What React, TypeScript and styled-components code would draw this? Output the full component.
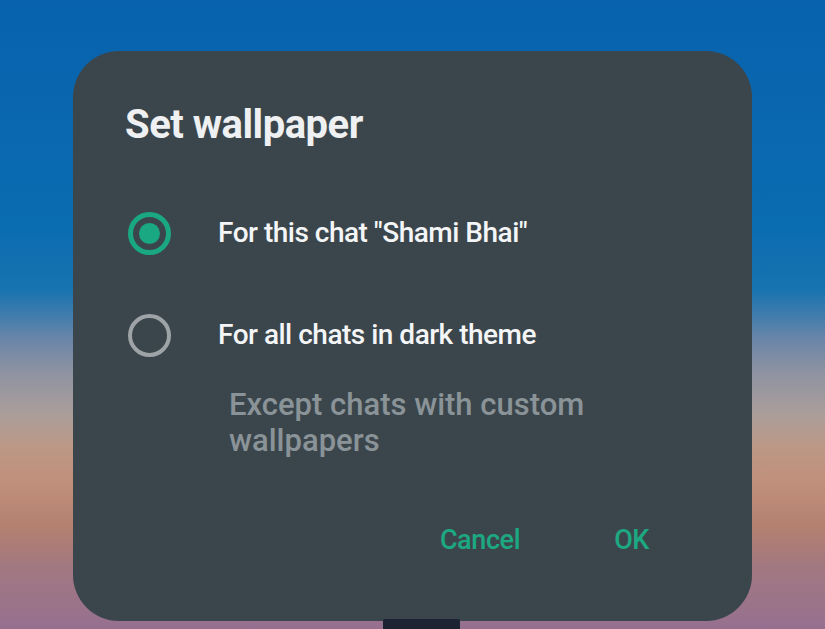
import { FC, useState } from 'react';
import styled, { createGlobalStyle } from 'styled-components';

const GlobalStyle = createGlobalStyle`
  html, body {
    margin: 0;
    padding: 0;
    height: 100%;
    overflow: hidden;
  }
  body {
    font-family: Roboto, 'Noto Sans', 'Liberation Sans', sans-serif;
  }
`;

interface OptionProps {
  label: string;
  checked: boolean;
  onSelect: () => void;
}

const Option: FC<OptionProps> = ({ label, checked, onSelect }) => (
  <Row onClick={onSelect}>
    <Radio checked={checked}>{checked && <Dot />}</Radio>
    <Label>{label}</Label>
  </Row>
);

const App: FC = () => {
  const [choice, setChoice] = useState<'chat' | 'all'>('chat');

  return (
    <Page>
      <GlobalStyle />
      <Dialog>
        <Title>Set wallpaper</Title>
        <Options>
          <Option
            label='For this chat "Shami Bhai"'
            checked={choice === 'chat'}
            onSelect={() => setChoice('chat')}
          />
          <Option
            label='For all chats in dark theme'
            checked={choice === 'all'}
            onSelect={() => setChoice('all')}
          />
        </Options>
        <Hint>
          Except chats with custom
          <br />
          wallpapers
        </Hint>
        <Actions>
          <Action>Cancel</Action>
          <Action>OK</Action>
        </Actions>
      </Dialog>
      <Stand />
    </Page>
  );
};

const Page = styled.div`
  height: 629px;
  box-sizing: border-box;
  padding: 51px 0 0 73px;
  background: linear-gradient(
    180deg,
    #0862ad 0%,
    #0a6cb1 36%,
    #1873b0 46%,
    #3f7cad 50%,
    #6a86a8 54%,
    #8d92a2 59%,
    #ab9e9a 66%,
    #bc9886 71%,
    #c08f7a 77%,
    #b38070 84%,
    #a27880 90%,
    #967090 100%
  );
`;

const Dialog = styled.div`
  width: 679px;
  height: 570px;
  box-sizing: border-box;
  background-color: #3b464c;
  border-radius: 46px;
  padding: 52px 0 0 0;
  display: flex;
  flex-direction: column;
`;

const Title = styled.h1`
  margin: 0 0 0 52px;
  font-size: 40px;
  line-height: 44px;
  font-weight: 700;
  letter-spacing: -0.5px;
  color: #eef0f1;
`;

const Options = styled.div`
  margin-top: 56px;
  display: flex;
  flex-direction: column;
  gap: 42px;
`;

const Row = styled.div`
  height: 60px;
  display: flex;
  align-items: center;
  padding-left: 55px;
  cursor: pointer;
`;

const Radio = styled.div<{ checked: boolean }>`
  width: 43px;
  height: 43px;
  box-sizing: border-box;
  border-radius: 50%;
  border: ${({ checked }) => (checked ? '5px solid #1aa883' : '4px solid #9da3a6')};
  display: flex;
  align-items: center;
  justify-content: center;
  flex-shrink: 0;
`;

const Dot = styled.span`
  width: 21px;
  height: 21px;
  border-radius: 50%;
  background-color: #1aa883;
`;

const Label = styled.span`
  margin-left: 47px;
  font-size: 28px;
  line-height: 34px;
  font-weight: 500;
  letter-spacing: -0.5px;
  color: #f4f5f6;
`;

const Hint = styled.p`
  margin: 22px 0 0 156px;
  font-size: 31px;
  line-height: 36px;
  font-weight: 500;
  color: #8a9397;
`;

const Actions = styled.div`
  margin-top: 65px;
  padding-right: 103px;
  display: flex;
  justify-content: flex-end;
  gap: 94px;
`;

const Action = styled.button`
  border: none;
  background: none;
  padding: 0;
  font-family: inherit;
  font-size: 27px;
  line-height: 32px;
  font-weight: 500;
  letter-spacing: -0.4px;
  color: #1ca982;
  cursor: pointer;
`;

const Stand = styled.div`
  width: 77px;
  height: 10px;
  margin: -2px 0 0 310px;
  background-color: #1c2333;
  border-radius: 2px 2px 0 0;
`;

export default App;
